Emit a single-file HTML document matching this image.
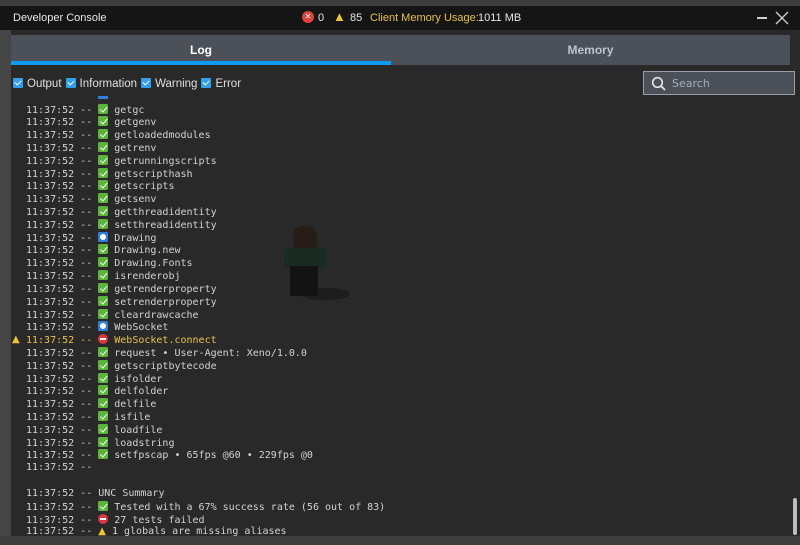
<!DOCTYPE html>
<html><head><meta charset="utf-8"><style>
html,body{margin:0;padding:0;width:800px;height:545px;overflow:hidden;background:#434343;font-family:"Liberation Sans",sans-serif}
.wrap{position:relative;width:800px;height:545px;background:#3d3d3d}
.console{position:absolute;left:0;top:6px;width:800px;height:539px;background:#29292a}
.left{position:absolute;left:0;top:30px;width:11px;height:515px;background:#454545}
.title{position:absolute;left:0;top:6px;width:800px;height:24px;background:#151516;color:#e8e8e8;font-size:11px}
.tabs{position:absolute;left:11px;top:35px;width:779px;height:30px;background:#4b5059}
.tab{position:absolute;top:0;height:30px;line-height:30px;text-align:center;font-size:12px;font-weight:bold}
.ul{position:absolute;left:0;top:26px;width:380px;height:4px;background:#0f9bf0}
.cb{display:inline-block;width:10px;height:10px;background:#32a0e8;border-radius:1px;vertical-align:-1px;margin-right:4px;position:relative}
.cb:after{content:"";position:absolute;left:3px;top:1px;width:3px;height:5px;border:solid #fff;border-width:0 1.3px 1.3px 0;transform:rotate(45deg)}
.filters{position:absolute;left:13px;top:78px;font-size:11.5px;color:#e0e0e0}
.filters span.l{margin-right:4px}
.search{position:absolute;left:643px;top:71px;width:152px;height:24px;border:1px solid #9a9ea6;background:#4b5059;box-sizing:border-box}
.log{position:absolute;left:26px;top:103.5px;font-family:"DejaVu Sans Mono","Liberation Mono",monospace;font-size:10px;color:#d2d2d2}
.r{height:12.82px;line-height:12.82px;white-space:pre;position:relative}
.ic{display:inline-block;width:10px;height:10px;border-radius:1.5px;vertical-align:-1px;position:relative}
.ok{background:#5cb53a}
.ok:after{content:"";position:absolute;left:3.5px;top:1px;width:2.5px;height:5.5px;border:solid #fff;border-width:0 1.5px 1.5px 0;transform:rotate(40deg)}
.info{background:#2f7fd4}
.info:after{content:"";position:absolute;left:2px;top:2px;width:6px;height:6px;border-radius:50%;background:#fff}
.no{background:#d9363e;border-radius:50%}
.no:after{content:"";position:absolute;left:2px;top:4px;width:6px;height:2px;background:#fff}
.y{color:#e8c14c}
</style></head><body><div class="wrap">
<div class="console"></div>
<div style="position:absolute;left:300px;top:288px;width:50px;height:12px;background:#1d1d1e;border-radius:50%"></div>
<div style="position:absolute;left:293px;top:226px;width:24px;height:24px;background:#261d18;border-radius:8px 10px 4px 4px"></div>
<div style="position:absolute;left:284px;top:248px;width:42px;height:20px;background:#1a2b21;border-radius:3px"></div>
<div style="position:absolute;left:290px;top:266px;width:28px;height:30px;background:#121413"></div>
<div class="left"></div>
<div class="title">
 <div style="position:absolute;left:13px;top:6px">Developer Console</div>
 <div style="position:absolute;left:302px;top:5px;width:12px;height:12px;border-radius:50%;background:#d9443e;color:#fff;font-size:8px;text-align:center;line-height:12px">✕</div>
 <div style="position:absolute;left:318px;top:6px">0</div>
 <div style="position:absolute;left:333px;top:3px;color:#f1c232;font-size:13px">▲</div>
 <div style="position:absolute;left:350px;top:6px">85</div>
 <div style="position:absolute;left:370px;top:6px;color:#e8c14c">Client Memory Usage:</div>
 <div style="position:absolute;left:478px;top:6px">1011 MB</div>
 <div style="position:absolute;left:757px;top:11px;width:10px;height:1.5px;background:#cfcfcf"></div>
 <svg width="14" height="14" style="position:absolute;left:775px;top:5px"><path d="M1 1L13 13M13 1L1 13" stroke="#d0d0d0" stroke-width="1.3"/></svg>
</div>
<div class="tabs">
 <div class="tab" style="left:0;width:380px;color:#fff">Log</div>
 <div class="tab" style="left:380px;width:399px;color:#bfc3ca">Memory</div>
 <div class="ul"></div>
</div>
<div class="filters"><span class="cb"></span><span class="l">Output</span><span class="cb"></span><span class="l">Information</span><span class="cb"></span><span class="l">Warning</span><span class="cb"></span><span class="l">Error</span></div>
<div class="search">
 <svg width="16" height="16" style="position:absolute;left:7px;top:4px"><circle cx="6.5" cy="6.5" r="4.8" stroke="#e6e6e6" stroke-width="1.6" fill="none"/><line x1="10" y1="10" x2="14" y2="14" stroke="#e6e6e6" stroke-width="1.8"/></svg>
 <div style="position:absolute;left:28px;top:5px;font-size:11px;color:#a6abb3;font-family:'DejaVu Sans',sans-serif">Search</div>
</div>
<div style="position:absolute;left:98px;top:96px;width:10px;height:3px;background:#2f7fd4"></div>
<div class="log">
<div class="r">11:37:52 -- <i class="ic ok"></i> getgc</div>
<div class="r">11:37:52 -- <i class="ic ok"></i> getgenv</div>
<div class="r">11:37:52 -- <i class="ic ok"></i> getloadedmodules</div>
<div class="r">11:37:52 -- <i class="ic ok"></i> getrenv</div>
<div class="r">11:37:52 -- <i class="ic ok"></i> getrunningscripts</div>
<div class="r">11:37:52 -- <i class="ic ok"></i> getscripthash</div>
<div class="r">11:37:52 -- <i class="ic ok"></i> getscripts</div>
<div class="r">11:37:52 -- <i class="ic ok"></i> getsenv</div>
<div class="r">11:37:52 -- <i class="ic ok"></i> getthreadidentity</div>
<div class="r">11:37:52 -- <i class="ic ok"></i> setthreadidentity</div>
<div class="r">11:37:52 -- <i class="ic info"></i> Drawing</div>
<div class="r">11:37:52 -- <i class="ic ok"></i> Drawing.new</div>
<div class="r">11:37:52 -- <i class="ic ok"></i> Drawing.Fonts</div>
<div class="r">11:37:52 -- <i class="ic ok"></i> isrenderobj</div>
<div class="r">11:37:52 -- <i class="ic ok"></i> getrenderproperty</div>
<div class="r">11:37:52 -- <i class="ic ok"></i> setrenderproperty</div>
<div class="r">11:37:52 -- <i class="ic ok"></i> cleardrawcache</div>
<div class="r">11:37:52 -- <i class="ic info"></i> WebSocket</div>
<div class="r y"><span style="position:absolute;left:-14px;top:0;color:#f1c232;font-family:'DejaVu Sans',sans-serif;font-size:10px">▲</span>11:37:52 -- <i class="ic no"></i> WebSocket.connect</div>
<div class="r">11:37:52 -- <i class="ic ok"></i> request • User-Agent: Xeno/1.0.0</div>
<div class="r">11:37:52 -- <i class="ic ok"></i> getscriptbytecode</div>
<div class="r">11:37:52 -- <i class="ic ok"></i> isfolder</div>
<div class="r">11:37:52 -- <i class="ic ok"></i> delfolder</div>
<div class="r">11:37:52 -- <i class="ic ok"></i> delfile</div>
<div class="r">11:37:52 -- <i class="ic ok"></i> isfile</div>
<div class="r">11:37:52 -- <i class="ic ok"></i> loadfile</div>
<div class="r">11:37:52 -- <i class="ic ok"></i> loadstring</div>
<div class="r">11:37:52 -- <i class="ic ok"></i> setfpscap • 65fps @60 • 229fps @0</div>
<div class="r">11:37:52 --</div>
<div class="r"> </div>
<div class="r">11:37:52 -- UNC Summary</div>
<div class="r">11:37:52 -- <i class="ic ok"></i> Tested with a 67% success rate (56 out of 83)</div>
<div class="r">11:37:52 -- <i class="ic no"></i> 27 tests failed</div>
<div class="r">11:37:52 -- <span style="color:#f1c232;font-family:'DejaVu Sans',sans-serif">▲</span> 1 globals are missing aliases</div>
</div>
<div style="position:absolute;left:793px;top:498px;width:4px;height:37px;background:#bdbdbd;border-radius:2px"></div>
<div style="position:absolute;left:0;top:536px;width:800px;height:9px;background:#3e3e3f"></div>
</div></body></html>
